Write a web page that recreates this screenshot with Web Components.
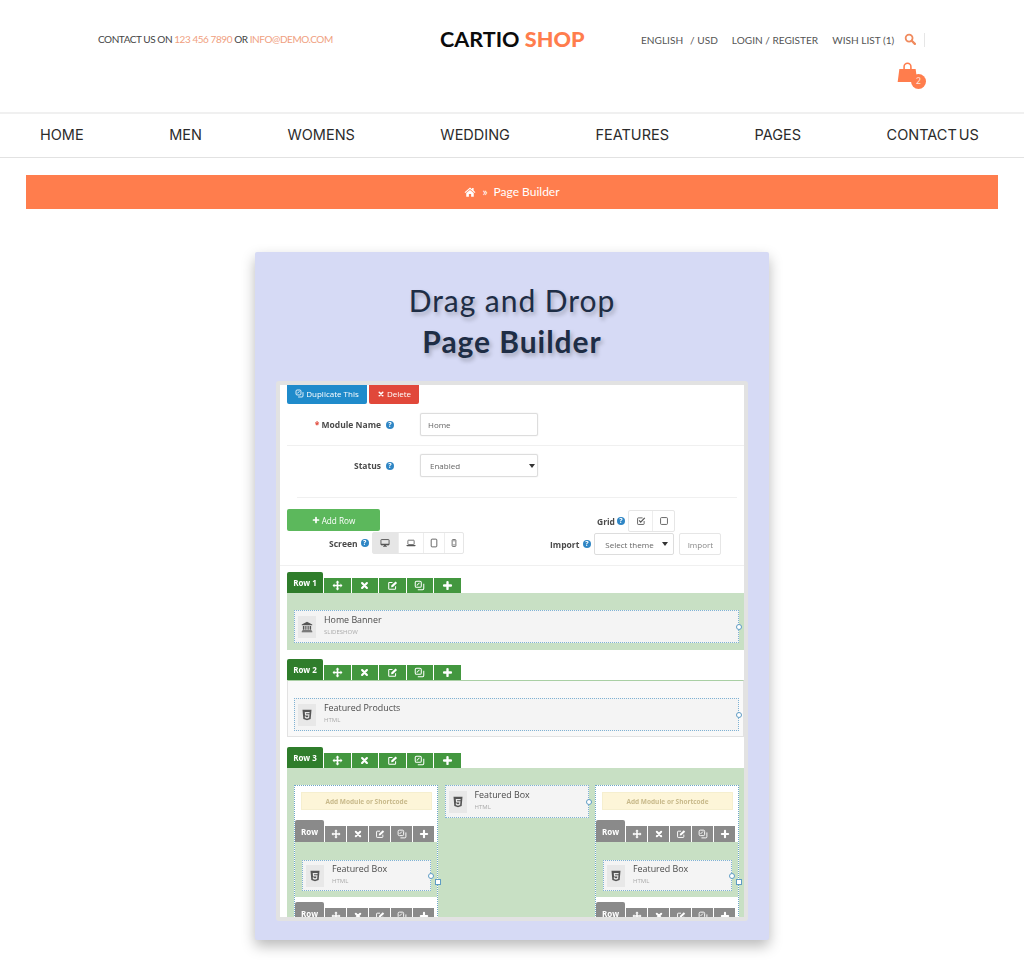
<!DOCTYPE html>
<html lang="en">
  <head>
    <meta charset="UTF-8" />
    <title>Cartio Shop - Page Builder</title>
    <style>
      html, body { margin: 0; padding: 0; background: #fff; }
      body { font-family: "Lato", "Liberation Sans", sans-serif; height: 980px; overflow: hidden; }
    </style>
  </head>
  <body>
    <site-header></site-header>
    <site-nav>
      <a>HOME</a><a>MEN</a><a>WOMENS</a><a>WEDDING</a><a>FEATURES</a><a>PAGES</a><a>CONTACT US</a>
    </site-nav>
    <bread-crumb>Page Builder</bread-crumb>
    <promo-card>
      <span slot="light">Drag and Drop</span>
      <span slot="bold">Page Builder</span>
      <builder-panel>
        <row-block label="Row 1" tone="green">
          <module-card icon="bank" heading="Home Banner" sub="SLIDESHOW"></module-card>
        </row-block>
        <row-block label="Row 2" tone="plain">
          <module-card icon="html5" heading="Featured Products" sub="HTML"></module-card>
        </row-block>
        <row-block label="Row 3" tone="green" grid>
          <builder-col>
            <add-module></add-module>
            <row-block label="Row" tone="grey">
              <module-card icon="html5" heading="Featured Box" sub="HTML"></module-card>
            </row-block>
            <row-block label="Row" tone="grey"></row-block>
          </builder-col>
          <div>
            <module-card icon="html5" heading="Featured Box" sub="HTML"></module-card>
          </div>
          <builder-col>
            <add-module></add-module>
            <row-block label="Row" tone="grey">
              <module-card icon="html5" heading="Featured Box" sub="HTML"></module-card>
            </row-block>
            <row-block label="Row" tone="grey"></row-block>
          </builder-col>
        </row-block>
      </builder-panel>
    </promo-card>

    <script>
      // Icon shapes, all on a 16x16 box
      const ICONS = {
        home: '<path fill="currentColor" d="M8 2 .8 8.2l.9 1L8 3.9l6.300 5.300.9-1L12.800 6.100V2.800h-2v1.600zM3 9.400 8 5.200l5 4.200V14.200H9.500v-3.400h-3v3.400H3z"/>',
        search: '<circle cx="6.800" cy="6.800" r="4.600" fill="none" stroke="currentColor" stroke-width="2.400"/><path d="m10.300 10.300 4.200 4.200" stroke="currentColor" stroke-width="3" stroke-linecap="round"/>',
        move: '<path fill="currentColor" d="M8 .8 10.800 3.600H9.200V6.800h3.200V5.200L15.200 8l-2.800 2.800V9.200H9.200v3.200h1.600L8 15.200l-2.800-2.800h1.600V9.200H3.600v1.600L.8 8l2.800-2.800v1.600h3.200V3.600H5.200z"/>',
        times: '<path d="m4.500 4.500 7 7m0-7-7 7" stroke="currentColor" stroke-width="3.200" stroke-linecap="round"/>',
        plus: '<path d="M8 3v10M3 8h10" stroke="currentColor" stroke-width="3.400" stroke-linecap="round"/>',
        edit: '<path d="M12.500 9v3.500a1 1 0 0 1-1 1h-8a1 1 0 0 1-1-1v-8a1 1 0 0 1 1-1H8" fill="none" stroke="currentColor" stroke-width="1.500"/><path fill="currentColor" d="m6 10.500.5-2.800L12.500 2l2.200 2.200-6 5.800z"/>',
        copy: '<rect x="1.800" y="1.800" width="8.800" height="8.800" rx="2" fill="none" stroke="currentColor" stroke-width="1.500"/><path d="M5.500 14.200h7a1.700 1.700 0 0 0 1.700-1.700v-7M4 8l4-4" fill="none" stroke="currentColor" stroke-width="1.500"/>',
        bank: '<path fill="currentColor" d="M8 1 15 4.600V5.800H1V4.600zM2.500 6.600h2v5h-2zM5.700 6.600h1.600v5H5.700zM8.700 6.600h1.600v5H8.700zM11.500 6.600h2v5h-2zM1.800 12.200h12.400v1.200H1.800zM1 13.800h14V15H1z"/>',
        html5: '<path fill="currentColor" fill-rule="evenodd" d="M2 1h12l-1.100 12.200L8 15l-4.900-1.800zM5 4l.4 4.500h4.300l-.2 2-1.500.5-1.500-.5-.1-1H5l.2 2.400L8 13l2.800-1 .5-5H6.800l-.1-1.300h4.700L11.500 4z"/>',
        desktop: '<rect x="1.500" y="2.500" width="13" height="8.500" rx=".8" fill="none" stroke="currentColor" stroke-width="1.500"/><path fill="currentColor" d="M1.500 9h13v2h-13zM6.500 11h3v1.800h1.500v1H5v-1h1.500z"/>',
        laptop: '<rect x="3" y="3.500" width="10" height="7" rx=".8" fill="none" stroke="currentColor" stroke-width="1.300"/><path fill="currentColor" d="M.8 11h14.400v1a1 1 0 0 1-1 1H1.800a1 1 0 0 1-1-1z"/>',
        tablet: '<rect x="3.500" y="1.800" width="9" height="12.400" rx="1.400" fill="none" stroke="currentColor" stroke-width="1.400"/>',
        mobile: '<rect x="5" y="2.500" width="6" height="11" rx="1.200" fill="none" stroke="currentColor" stroke-width="1.300"/><path d="M6 4.500h4m-4 6.500h4" stroke="currentColor"/>',
        check: '<path d="M13 8v4.500a1 1 0 0 1-1 1H3.500a1 1 0 0 1-1-1V4a1 1 0 0 1 1-1h7" fill="none" stroke="currentColor" stroke-width="1.400"/><path d="m5 7 2.500 2.700L14 3" fill="none" stroke="currentColor" stroke-width="2"/>',
        square: '<rect x="2.500" y="2.500" width="11" height="11" rx="1.500" fill="none" stroke="currentColor" stroke-width="1.400"/>',
        bag: '<path fill="currentColor" d="M1.800 5.400h12.400l1.300 9.800H.5zM4.800 5.400V3.600a3.200 3.200 0 0 1 6.400 0v1.800H10V3.600a2 2 0 0 0-4 0v1.800z"/>',
      };

      class FaIcon extends HTMLElement {
        connectedCallback() {
          const size = this.getAttribute("size") || 12;
          this.attachShadow({ mode: "open" }).innerHTML = `
            <style>
              :host { display: inline-flex; flex: none; }
              svg { display: block; }
            </style>
            <svg width="${size}" height="${size}" viewBox="0 0 16 16">${ICONS[this.getAttribute("name")]}</svg>`;
        }
      }

      class HelpDot extends HTMLElement {
        constructor() {
          super();
          this.attachShadow({ mode: "open" }).innerHTML = `
            <style>
              :host {
                display: inline-flex; flex: none; width: 8px; height: 8px; border-radius: 50%;
                background: #2f86c5; color: #fff; font: bold 7px/8px "Open Sans", sans-serif;
                align-items: center; justify-content: center;
              }
            </style>?`;
        }
      }

      class SiteHeader extends HTMLElement {
        constructor() {
          super();
          this.attachShadow({ mode: "open" }).innerHTML = `
            <style>
              :host {
                display: grid; grid-template-columns: 440px 201px 1fr; height: 112px;
                border-bottom: 2px solid #f0f0f0; font-family: "Lato", sans-serif;
              }
              .contact { padding: 33px 0 0 98px; font-size: 10px; line-height: 13px; color: #444; letter-spacing: -.44px; white-space: nowrap; }
              .contact b { font-weight: 400; color: #f0a080; }
              .logo { padding-top: 25px; font-size: 21.600px; line-height: 28px; font-weight: 700; color: #0b0b0b; white-space: nowrap; }
              .logo b { color: #ff7d4d; }
              .links { padding-top: 33px; display: flex; align-items: flex-start; font-size: 10.100px; line-height: 14px; color: #555; white-space: nowrap; }
              .links span { margin-right: 14px; }
              .links .lang { margin-right: 7px; }
              .links fa-icon { color: #f08a5d; margin: 0 8px 0 -4px; }
              .rule { width: 1px; height: 14px; background: #e6e6e6; }
              .cart { position: relative; width: 30px; margin: 15px 0 0 256px; color: #ff7d4d; }
              .badge {
                position: absolute; left: 14px; top: 12px; width: 15px; height: 15px; border-radius: 50%;
                background: #ff7d4d; color: #ffe6dc; font-size: 8.500px; line-height: 15px; text-align: center;
              }
            </style>
            <div class="contact">CONTACT US ON <b>123 456 7890</b> OR <b>INFO@DEMO.COM</b></div>
            <div class="logo">CARTIO <b>SHOP</b></div>
            <div>
              <div class="links">
                <span class="lang">ENGLISH</span><span>/ USD</span><span>LOGIN / REGISTER</span><span>WISH LIST (1)</span>
                <fa-icon name="search" size="12"></fa-icon><div class="rule"></div>
              </div>
              <div class="cart"><fa-icon name="bag" size="21"></fa-icon><div class="badge">2</div></div>
            </div>`;
        }
      }

      class SiteNav extends HTMLElement {
        constructor() {
          super();
          this.attachShadow({ mode: "open" }).innerHTML = `
            <style>
              :host {
                display: flex; justify-content: space-between; align-items: center; height: 41px;
                padding: 0 45px 2px 40px; border-bottom: 1px solid #e2e2e2; word-spacing: -2px;
                font: 400 14.500px "Inter", "Noto Sans", sans-serif; color: #2b2b2b;
              }
            </style>
            <slot></slot>`;
        }
      }

      class BreadCrumb extends HTMLElement {
        constructor() {
          super();
          this.attachShadow({ mode: "open" }).innerHTML = `
            <style>
              :host {
                display: flex; justify-content: center; align-items: center; gap: 6px; height: 33px; padding-bottom: 1px;
                margin: 17px 26px 0; background: #ff7d4d; color: #fff; font: 400 12px "Lato", sans-serif;
              }
            </style>
            <fa-icon name="home" size="12"></fa-icon><span>»</span><span><slot></slot></span>`;
        }
      }

      class PromoCard extends HTMLElement {
        constructor() {
          super();
          this.attachShadow({ mode: "open" }).innerHTML = `
            <style>
              :host {
                display: block; box-sizing: border-box; width: 514px; height: 688px; margin: 43px 0 0 255px;
                padding: 28px 21px 0; background: #d6daf5; border-radius: 2px;
                box-shadow: 0 6px 14px rgba(0, 0, 0, .28);
              }
              h1 {
                margin: 0 0 19px; text-align: center; font: 400 30px/41px "Lato", "Noto Sans", sans-serif;
                letter-spacing: .95px; color: #1e2d45; text-shadow: 2px 3px 4px rgba(0, 0, 0, .25);
              }
              h1 span { display: block; }
              .b { font-weight: 700; }
            </style>
            <h1><span><slot name="light"></slot></span><span class="b"><slot name="bold"></slot></span></h1>
            <slot></slot>`;
        }
      }

      class BuilderPanel extends HTMLElement {
        constructor() {
          super();
          this.attachShadow({ mode: "open" }).innerHTML = `
            <style>
              :host {
                display: block; box-sizing: border-box; height: 540px; overflow: hidden;
                border: 4px solid #e2e2e2; border-radius: 3px; background: #fff; color: #444;
                font: 400 8.500px "Open Sans", sans-serif; padding-left: 7px; filter: blur(.35px);
              }
              .btns { display: flex; gap: 2px; font-size: 8px; }
              .btn { box-sizing: border-box; height: 19px; padding-bottom: 2px; border-radius: 0 0 2px 2px; color: #fff; display: flex; align-items: center; justify-content: center; gap: 2px; }
              .dup { width: 80px; background: #1f8bcb; }
              .del { width: 50px; background: #e1483a; }
              .form-row { display: flex; align-items: center; height: 23px; padding-top: 9px; }
              label { font-weight: 700; color: #4a4a4a; white-space: nowrap; }
              .form-row .lab { width: 107px; display: flex; justify-content: flex-end; align-items: center; gap: 5px; margin-right: 26px; }
              label i { color: #e1483a; font-style: normal; }
              .field {
                box-sizing: border-box; width: 118px; height: 23px; padding: 0 7px; display: flex; align-items: center; justify-content: space-between;
                border: 1px solid #ddd; border-radius: 2px; color: #666; box-shadow: 0 0 1px #ccc; font-size: 8px;
              }
              .caret { width: 0; height: 0; border: 3px solid transparent; border-top: 4px solid #333; border-bottom: 0; }
              .hr { height: 1px; background: #f0f0f0; }
              .tool-top { display: grid; grid-template-columns: 93px 1fr; margin-top: 11px; height: 56px; position: relative; }
              .add { height: 22px; border-radius: 2px; background: #5cb85c; color: #fff; display: flex; align-items: center; justify-content: center; gap: 2px; font-size: 8.200px; }
              .group { box-sizing: border-box; display: flex; border: 1px solid #e6e6e6; border-radius: 2px; height: 22px; color: #555; }
              .group span { box-sizing: border-box; display: flex; align-items: center; justify-content: center; border-left: 1px solid #ededed; }
              .group span:first-child { border-left: 0; }
              .on { background: #e6e6e6; }
              .line { display: flex; align-items: center; }
              .screen-line { position: absolute; left: 42px; top: 23px; gap: 3px; }
              .grid-line { position: absolute; left: 310px; top: 1px; gap: 2px; }
              .grid-line help-dot { margin-right: 1px; }
              .import-line { position: absolute; left: 263px; top: 24px; gap: 3.500px; }
              .pick { box-sizing: border-box; width: 80px; height: 22px; padding: 0 5px 0 10px; display: flex; align-items: center; justify-content: space-between; border: 1px solid #ddd; border-radius: 2px; color: #666; white-space: nowrap; font-size: 8px; }
              .go { box-sizing: border-box; width: 42px; height: 22px; margin-left: 1.500px; display: flex; align-items: center; justify-content: center; border: 1px solid #e6e6e6; border-radius: 2px; color: #888; font-size: 8px; }
            </style>
            <div class="btns">
              <div class="btn dup"><fa-icon name="copy" size="9"></fa-icon>Duplicate This</div>
              <div class="btn del"><fa-icon name="times" size="8"></fa-icon>Delete</div>
            </div>
            <div class="form-row">
              <div class="lab"><label><i>*</i> Module Name</label><help-dot></help-dot></div>
              <div class="field">Home</div>
            </div>
            <div class="hr" style="margin-top:9px"></div>
            <div class="form-row" style="padding-top:8px">
              <div class="lab"><label>Status</label><help-dot></help-dot></div>
              <div class="field" style="padding-left:9px;padding-right:2px;">Enabled<div class="caret"></div></div>
            </div>
            <div class="hr" style="margin:20px 7px 0 10px"></div>
            <div class="tool-top">
              <div class="add"><fa-icon name="plus" size="8"></fa-icon>Add Row</div>
              <div class="line grid-line">
                <label>Grid</label><help-dot></help-dot>
                <div class="group"><span style="width:23px"><fa-icon name="check" size="10"></fa-icon></span><span style="width:22px"><fa-icon name="square" size="10"></fa-icon></span></div>
              </div>
              <div class="line screen-line">
                <label>Screen</label><help-dot></help-dot>
                <div class="group">
                  <span class="on" style="width:25px"><fa-icon name="desktop" size="10"></fa-icon></span>
                  <span style="width:25px"><fa-icon name="laptop" size="10"></fa-icon></span>
                  <span style="width:21px"><fa-icon name="tablet" size="10"></fa-icon></span>
                  <span style="width:19px"><fa-icon name="mobile" size="10"></fa-icon></span>
                </div>
              </div>
              <div class="line import-line">
                <label>Import</label><help-dot></help-dot>
                <div class="pick">Select theme<div class="caret"></div></div>
                <div class="go">Import</div>
              </div>
            </div>
            <div class="hr" style="margin:0 0 0 -7px"></div>
            <slot></slot>`;
        }
      }

      class RowBlock extends HTMLElement {
        connectedCallback() {
          const tone = this.getAttribute("tone");
          const tools = ["move", "times", "edit", "copy", "plus"]
            .map((name) => `<span><fa-icon name="${name}" size="${tone === "grey" ? 10 : 11}"></fa-icon></span>`)
            .join("");
          this.attachShadow({ mode: "open" }).innerHTML = `
            <style>
              :host { display: block; }
              :host([tone="green"]), :host([tone="plain"]) { margin-top: 6px; margin-bottom: 9px; }
              :host([grid]) { margin-top: 10px; }
              .head { display: flex; align-items: flex-end; gap: 1px; }
              .tab {
                width: 36px; height: 21px; border-radius: 2px 2px 0 0; background: #2f7d2b; color: #fff; font-size: 8px;
                font-weight: 700; display: flex; align-items: center; justify-content: center;
              }
              .tools { display: flex; gap: 1px; }
              .tools span { width: 26.500px; height: 15px; background: #43973f; color: #fff; display: flex; align-items: center; justify-content: center; }
              .body { box-sizing: border-box; position: relative; min-height: 57px; padding: 17px 5px 7px 7px; background: #c8e0c4; }
              :host([tone="plain"]) .body { background: #f9f9f9; border: 1px solid #e2e2e2; border-top-color: #a9cfa4; padding: 17px 4px 5px 6px; }
              :host([grid]) .body { display: grid; grid-template-columns: repeat(3, 1fr); gap: 6.500px; align-items: start; height: 400px; }
              :host([tone="grey"]) { margin: 0 1px 5px; }
              :host([tone="grey"]) .tab { width: 29px; height: 22px; background: #8a8a8a; }
              :host([tone="grey"]) .tools span { width: 21px; height: 16px; background: #8a8a8a; }
              :host([tone="grey"]) .body { min-height: 55px; padding: 18px 6px 6px 7px; }
              :host([tone="grey"]) ::slotted(module-card) { height: 31px; }
              .handle { display: none; position: absolute; right: -4px; top: 37px; width: 4px; height: 4px; border: 1px solid #5f9cc4; background: #fff; }
              :host([tone="grey"]) .handle { display: block; }
            </style>
            <div class="head"><div class="tab">${this.getAttribute("label")}</div><div class="tools">${tools}</div></div>
            <div class="body"><slot></slot><div class="handle"></div></div>`;
        }
      }

      class BuilderCol extends HTMLElement {
        constructor() {
          super();
          this.attachShadow({ mode: "open" }).innerHTML = `
            <style>
              :host { display: block; height: 200px; background: #fff; outline: 1px dotted #6ea6c8; outline-offset: -1px; padding-top: 7px; }
            </style>
            <slot></slot>`;
        }
      }

      class AddModule extends HTMLElement {
        constructor() {
          super();
          this.attachShadow({ mode: "open" }).innerHTML = `
            <style>
              :host {
                display: flex; align-items: center; justify-content: center; height: 18px; margin: 0 6px 10px 7px;
                background: #fdf5d8; border: 1px solid #f6efcf; box-sizing: border-box; color: #c8b98a; font-weight: 700; font-size: 6.500px; white-space: nowrap;
              }
            </style>
            Add Module or Shortcode`;
        }
      }

      class ModuleCard extends HTMLElement {
        connectedCallback() {
          this.attachShadow({ mode: "open" }).innerHTML = `
            <style>
              :host {
                display: flex; position: relative; align-items: center; box-sizing: border-box; height: 33px; padding-left: 4px;
                background: #f4f4f4; outline: 1px dotted #7fb2d4; outline-offset: -1px;
              }
              .ico { flex: none; width: 18px; height: 22px; background: #e8e8e8; color: #555; display: flex; align-items: center; justify-content: center; }
              .txt { margin-left: 8px; padding-bottom: 2px; }
              .t { font-size: 8.900px; line-height: 12px; color: #4a4a4a; }
              .s { font-size: 6px; line-height: 9px; color: #aaa; margin-top: 2px; }
              .dot { position: absolute; right: -3px; top: calc(50% - 3px); width: 4px; height: 4px; border: 1px solid #5f9cc4; border-radius: 50%; background: #fff; }
            </style>
            <div class="ico"><fa-icon name="${this.getAttribute("icon")}" size="12"></fa-icon></div>
            <div class="txt"><div class="t">${this.getAttribute("heading")}</div><div class="s">${this.getAttribute("sub")}</div></div>
            <div class="dot"></div>`;
        }
      }

      customElements.define("fa-icon", FaIcon);
      customElements.define("help-dot", HelpDot);
      customElements.define("site-header", SiteHeader);
      customElements.define("site-nav", SiteNav);
      customElements.define("bread-crumb", BreadCrumb);
      customElements.define("promo-card", PromoCard);
      customElements.define("builder-panel", BuilderPanel);
      customElements.define("row-block", RowBlock);
      customElements.define("builder-col", BuilderCol);
      customElements.define("add-module", AddModule);
      customElements.define("module-card", ModuleCard);
    </script>
  </body>
</html>
